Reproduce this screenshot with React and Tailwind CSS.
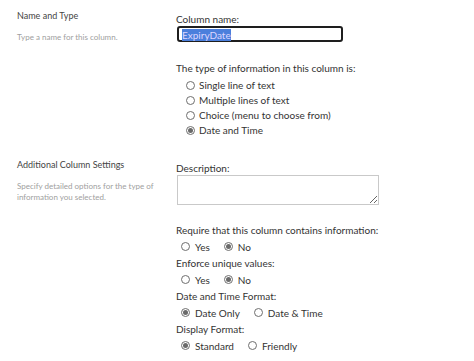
import React from 'react'

const font = { fontFamily: 'Lato, "Open Sans", sans-serif' }

function Radio({ checked }) {
    return (
        <span className="flex items-center justify-center w-[9px] h-[9px] rounded-full border border-[#6f6f6f] bg-white shrink-0">
            {checked && <span className="block w-[5px] h-[5px] rounded-full bg-[#6a6a6a]" />}
        </span>
    )
}

function Option({ label, checked, gap = 'gap-[5px]' }) {
    return (
        <span className={`flex items-center ${gap}`}>
            <Radio checked={checked} />
            <span>{label}</span>
        </span>
    )
}

function InlineGroup({ title, options }) {
    return (
        <div>
            <div className="h-[16px] flex items-center">{title}</div>
            <div className="h-[17px] flex items-center gap-[14px] pl-[5px]">
                {options.map((o) => (
                    <Option key={o.label} label={o.label} checked={o.checked} />
                ))}
            </div>
        </div>
    )
}

export default function App() {
    const types = [
        { label: 'Single line of text', checked: false },
        { label: 'Multiple lines of text', checked: false },
        { label: 'Choice (menu to choose from)', checked: false },
        { label: 'Date and Time', checked: true },
    ]

    return (
        <div className="w-[474px] h-[361px] bg-white overflow-hidden text-[#333] leading-none" style={font}>
            {/* Name and Type */}
            <div className="flex">
                <div className="w-[176px] shrink-0 pl-[17px] pt-[8px]">
                    <div className="h-[14px] flex items-center text-[9px] text-[#444]">Name and Type</div>
                    <div className="mt-[9px] h-[12px] flex items-center text-[8px] text-[#a0a0a0]">Type a name for this column.</div>
                </div>
                <div className="pt-[11px] text-[10px]">
                    <div className="h-[15px] flex items-center">Column name:</div>
                    <div className="w-[166px] h-[16px] border-2 border-[#1e1e1e] rounded-[3px] pl-[3px] pt-[1px] ml-[1px] leading-[12px]">
                        <span className="inline-block bg-[#4b7fdc] text-[#dcd6ff]">ExpiryDate</span>
                    </div>
                    <div className="mt-[18px] h-[15px] flex items-center">The type of information in this column is:</div>
                    <div className="mt-[2.5px] pl-[10px] flex flex-col">
                        {types.map((t) => (
                            <div key={t.label} className="h-[15px] flex items-center">
                                <Option label={t.label} checked={t.checked} gap="gap-[4px]" />
                            </div>
                        ))}
                    </div>
                </div>
            </div>

            {/* Additional Column Settings */}
            <div className="flex mt-[19.5px]">
                <div className="w-[176px] shrink-0 pl-[17px]">
                    <div className="h-[14px] flex items-center text-[9px] text-[#444]">Additional Column Settings</div>
                    <div className="mt-[10px] text-[8px] leading-[11px] text-[#a0a0a0]">
                        Specify detailed options for the type of
                        <br />
                        information you selected.
                    </div>
                </div>
                <div className="pt-[4px] text-[10px]">
                    <div className="h-[14px] flex items-center">Description:</div>
                    <textarea
                        readOnly
                        className="block w-[202px] h-[30px] ml-[1px] border border-[#c9c9c9] bg-white outline-none"
                    />
                    <div className="mt-[17px] flex flex-col">
                        <InlineGroup
                            title="Require that this column contains information:"
                            options={[{ label: 'Yes' }, { label: 'No', checked: true }]}
                        />
                        <InlineGroup
                            title="Enforce unique values:"
                            options={[{ label: 'Yes' }, { label: 'No', checked: true }]}
                        />
                        <InlineGroup
                            title="Date and Time Format:"
                            options={[{ label: 'Date Only', checked: true }, { label: 'Date & Time' }]}
                        />
                        <InlineGroup
                            title="Display Format:"
                            options={[{ label: 'Standard', checked: true }, { label: 'Friendly' }]}
                        />
                    </div>
                </div>
            </div>
        </div>
    )
}
